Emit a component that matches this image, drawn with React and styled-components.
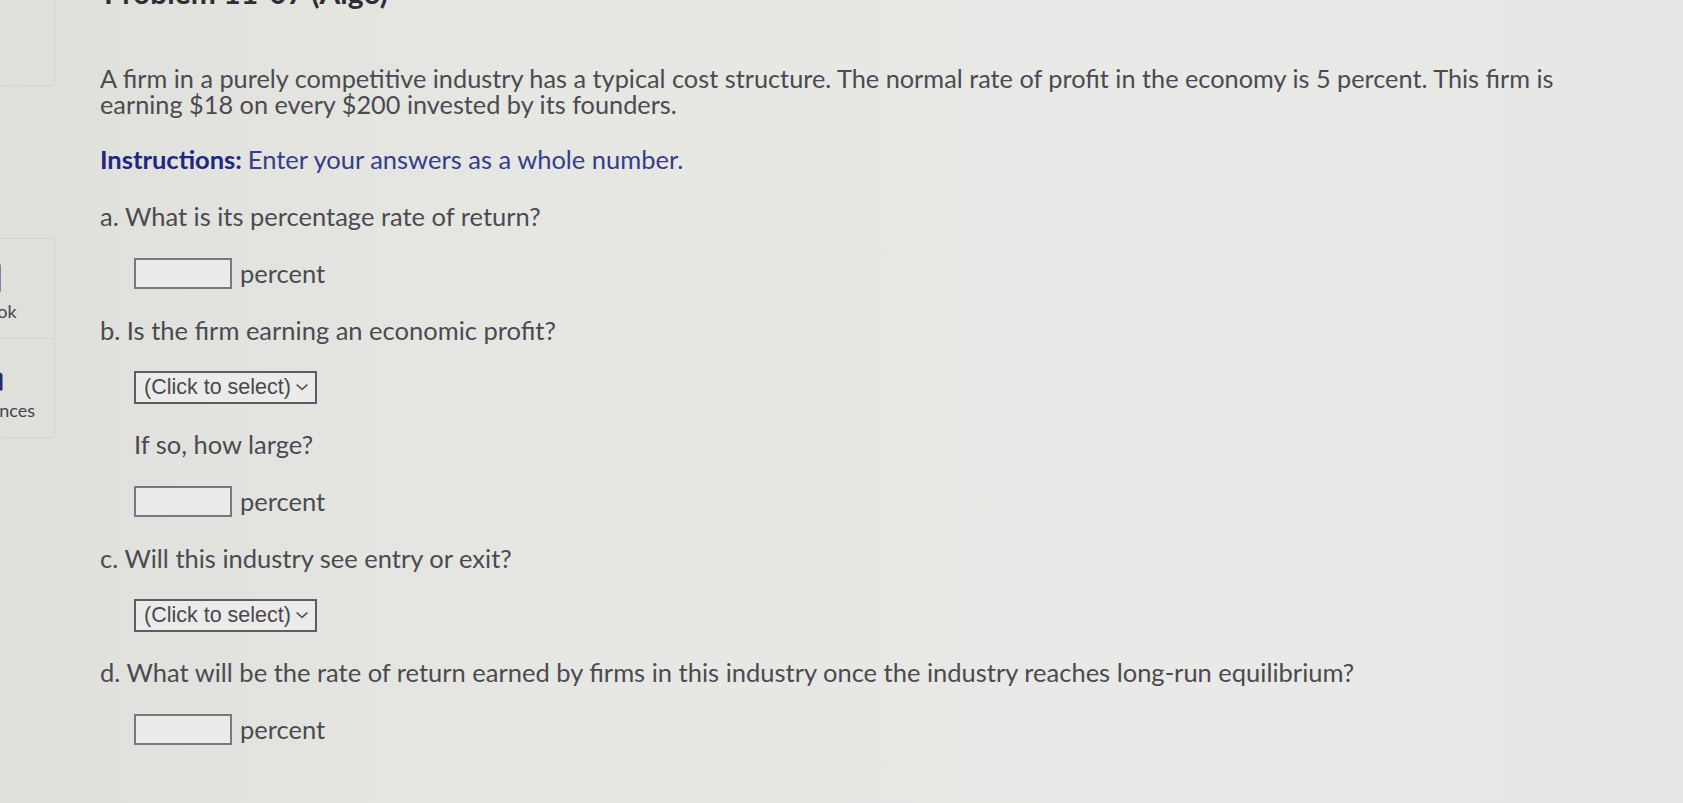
import React from 'react'
import styled, { createGlobalStyle } from 'styled-components'

const GlobalStyle = createGlobalStyle`
  html, body {
    margin: 0;
    padding: 0;
    height: 100%;
    overflow: hidden;
  }
  body {
    background: linear-gradient(90deg, #dfdfdc 0%, #e6e6e3 30%, #e9e9e7 70%, #e7e7e5 100%);
    font-family: Lato, "Open Sans", sans-serif;
    color: #4c4a51;
  }
`

const Page = styled.div`
  display: flex;
  height: 803px;
  overflow: hidden;
`

const Sidebar = styled.aside`
  width: 56px;
  flex: none;
  overflow: hidden;
`

const SidebarInner = styled.div`
  margin-left: -72px;
  width: 127px;
  display: flex;
  flex-direction: column;
`

const NavCard = styled.div`
  height: ${({ h }) => h}px;
  margin-top: ${({ gap }) => gap || 0}px;
  box-sizing: border-box;
  border: 1px solid #d3d3cf;
  border-radius: 3px;
  display: flex;
  flex-direction: column;
  align-items: center;
  justify-content: flex-end;
  padding-bottom: ${({ pb }) => pb || 0}px;
  gap: 8px;
`

const NavLabel = styled.span`
  font-family: Lato, sans-serif;
  font-size: 18px;
  color: #46454b;
`

const Main = styled.main`
  flex: 1;
  padding-left: 44px;
  padding-right: 60px;
  display: flex;
  flex-direction: column;
`

const Title = styled.h1`
  margin: -24px 0 0 0;
  padding-left: 4px;
  font-family: Lato, sans-serif;
  font-weight: 700;
  font-size: 30px;
  line-height: 32px;
  color: #2f2e34;
`

const Body = styled.p`
  margin: 57px 0 0 0;
  font-size: 25.3px;
  line-height: 26px;
  max-width: 1480px;
`

const Rows = styled.div`
  margin-top: 26px;
  display: flex;
  flex-direction: column;
  gap: 25px;
`

const Row = styled.div`
  height: 32px;
  display: flex;
  align-items: center;
  gap: 8px;
  font-size: 25.5px;
  white-space: nowrap;
  padding-left: ${({ indent }) => (indent ? 34 : 0)}px;
`

const Instructions = styled(Row)`
  color: #353c8e;
  b {
    color: #1e2784;
    font-weight: 700;
    margin-right: 6px;
  }
`

const NumBox = styled.div`
  width: 98px;
  height: 31px;
  box-sizing: border-box;
  border: 2px solid #7b7681;
  background: #ebebe9;
`

const Select = styled.div`
  width: 183px;
  height: 33px;
  box-sizing: border-box;
  border: 2px solid #5f5b64;
  display: flex;
  align-items: center;
  gap: 4px;
  padding: 0 6px 0 8px;
  font-family: "Liberation Sans", Arial, sans-serif;
  font-size: 21.5px;
  color: #4a4750;
  background: #ebebe9;
`

const Chevron = () => (
  <svg width="17" height="12" viewBox="0 0 17 12">
    <path d="M2 3 L8.5 9 L15 3" fill="none" stroke="#5a5660" strokeWidth="2" />
  </svg>
)

const BookIcon = () => (
  <svg width="24" height="28" viewBox="0 0 24 28">
    <path d="M3 2 H19 V26 H3 Z" fill="none" stroke="#1f2f73" strokeWidth="3" />
  </svg>
)

const RefIcon = () => (
  <svg width="24" height="26" viewBox="0 0 24 26">
    <path d="M3 4 H14 L21 10 V24 H3 Z" fill="none" stroke="#1f2f73" strokeWidth="3" />
  </svg>
)

const Answer = ({ kind }) =>
  kind === 'select' ? (
    <Row indent>
      <Select>
        (Click to select)
        <Chevron />
      </Select>
    </Row>
  ) : (
    <Row indent>
      <NumBox />
      percent
    </Row>
  )

export default function App() {
  return (
    <>
      <GlobalStyle />
      <Page>
        <Sidebar>
          <SidebarInner>
            <NavCard h={90} gap={-4} />
            <NavCard h={101} gap={152} pb={16}>
              <BookIcon />
              <NavLabel>eBook</NavLabel>
            </NavCard>
            <NavCard h={100} gap={-1} pb={16}>
              <RefIcon />
              <NavLabel>References</NavLabel>
            </NavCard>
          </SidebarInner>
        </Sidebar>
        <Main>
          <Title>Problem 11-07 (Algo)</Title>
          <Body>
            A firm in a purely competitive industry has a typical cost structure. The normal rate of
            profit in the economy is 5 percent. This firm is earning $18 on every $200 invested by its
            founders.
          </Body>
          <Rows>
            <Instructions>
              <span><b>Instructions:</b>Enter your answers as a whole number.</span>
            </Instructions>
            <Row>a. What is its percentage rate of return?</Row>
            <Answer kind="number" />
            <Row>b. Is the firm earning an economic profit?</Row>
            <Answer kind="select" />
            <Row indent>If so, how large?</Row>
            <Answer kind="number" />
            <Row>c. Will this industry see entry or exit?</Row>
            <Answer kind="select" />
            <Row>d. What will be the rate of return earned by firms in this industry once the industry reaches long-run equilibrium?</Row>
            <Answer kind="number" />
          </Rows>
        </Main>
      </Page>
    </>
  )
}
